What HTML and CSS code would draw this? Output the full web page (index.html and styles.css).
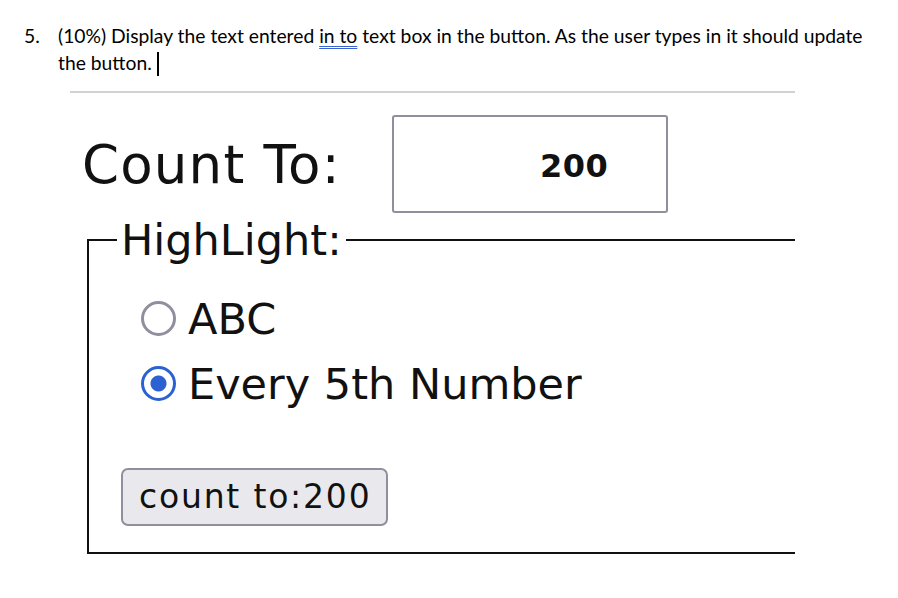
FILE: index.html
```html
<!DOCTYPE html>
<html>
<head>
<meta charset="utf-8">
<link rel="stylesheet" href="styles.css">
</head>
<body>
<div class="doc">
  <div class="item">
    <span class="num">5.</span>
    <div class="q">
      <div class="ln">(10%) Display the text entered <span class="gram">in to</span> text box in the button. As the user types in it should update</div>
      <div class="ln">the button. <span class="caret"></span></div>
    </div>
  </div>
  <div class="shot">
    <div class="row">
      <label class="big">Count To:</label>
      <div class="input">200</div>
    </div>
    <fieldset class="fs">
      <legend>HighLight:</legend>
      <div class="opt"><span class="radio"></span>ABC</div>
      <div class="opt"><span class="radio on"></span>Every 5th Number</div>
      <div class="btn">count to:200</div>
    </fieldset>
  </div>
</div>
</body>
</html>
```
FILE: styles.css
```css
html, body { margin: 0; padding: 0; background: #fff; }
body { width: 898px; height: 598px; overflow: hidden; }
.doc { padding: 22px 0 0 24px; }
.item { display: flex; font-family: Lato, "Open Sans", sans-serif; font-size: 19.3px; line-height: 27px; color: #000; }
.num { width: 34px; flex: none; }
.q { white-space: nowrap; }
.gram { text-decoration: underline double #3a63d0; text-decoration-thickness: 1px; text-underline-offset: 3px; }
.caret { display: inline-block; width: 2px; height: 24px; background: #000; vertical-align: -6px; }
.shot { margin: 15px 0 0 46px; width: 725px; border-top: 2px solid #d2d2d2; padding-top: 22px; font-family: "DejaVu Sans", Verdana, sans-serif; }
.row { display: flex; align-items: center; }
.big { font-size: 53px; letter-spacing: 1.2px; margin-left: 12px; width: 310px; color: #111; }
.input { width: 276px; height: 98px; border: 2px solid #8f8f9d; border-radius: 3px; display: flex; align-items: center; padding-left: 146px; padding-top: 4px; box-sizing: border-box; font-size: 32px; letter-spacing: 0.5px; font-weight: bold; color: #111; }
.fs { margin: 2px 0 0 17px; border: 2px solid #111; border-right: none; padding: 21px 0 26px 50px; }
.fs legend { font-size: 43px; padding: 0 4px; margin-left: -22px; color: #111; }
.opt { display: flex; align-items: center; font-size: 43px; color: #111; height: 65px; margin-left: 2px; }
.radio { width: 35px; height: 35px; border: 3px solid #8f8f9d; border-radius: 50%; margin-right: 12px; box-sizing: border-box; }
.radio.on { border: 3.5px solid #2a62d4; background: radial-gradient(circle, #2a62d4 0 7.5px, #fff 8.5px); }
.btn { display: inline-block; margin-top: 52px; margin-left: -18px; font-size: 33px; letter-spacing: 1.8px; padding: 7px 15px 8px 16px; background: #e9e9ed; border: 2px solid #8f8f9d; border-radius: 7px; color: #111; }
```
